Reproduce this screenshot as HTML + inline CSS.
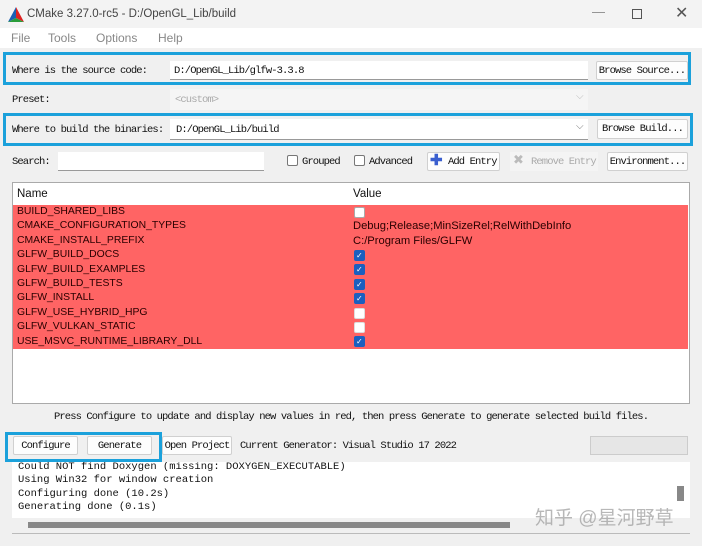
<!DOCTYPE html>
<html><head><meta charset="utf-8"><style>
*{box-sizing:border-box;margin:0;padding:0}
body{width:702px;height:546px;background:#f0f0f0;position:relative;overflow:hidden;font-family:"Liberation Sans",sans-serif}
.a{position:absolute}
.mono{font-family:"Liberation Mono","DejaVu Sans Mono",monospace;font-size:10.5px;color:#111;white-space:nowrap;letter-spacing:-0.9px}
.inp{background:#fff;border-bottom:1px solid #999}
.btn{background:#fdfdfd;border:1px solid #d0d0d0;border-radius:2px;text-align:center;line-height:18px}
.blue{border:3px solid #1ba1db}
.row{position:absolute;left:17px;font-size:10.4px;color:#2a0000;white-space:nowrap;line-height:14.4px}
.val{font-size:11.2px}
.cb{position:absolute;left:354px;width:11px;height:11px;border-radius:2px}
.on{background:#1b5fbf}
.off{background:#fff;border:1px solid #aaa}
.on:after{content:"✓";color:#fff;font-size:8px;position:absolute;left:2px;top:0;line-height:11px}
</style></head><body>
<div class="a" style="left:0;top:0;width:702px;height:28px;background:#f3f3f3"></div>
<svg class="a" style="left:8px;top:7px" width="16" height="15" viewBox="0 0 16 15"><polygon points="8,0 0,15 8,11" fill="#1a5fb4"/><polygon points="8,0 16,15 8,11" fill="#d22"/><polygon points="0,15 16,15 8,11" fill="#2a9d3a"/></svg>
<div class="a" style="left:27px;top:8px;font-size:11.5px;color:#444">CMake 3.27.0-rc5 - D:/OpenGL_Lib/build</div>
<div class="a" style="left:592px;top:4px;font-size:13px;color:#888">—</div>
<div class="a" style="left:632px;top:9px;width:10px;height:10px;border:1px solid #555"></div>
<div class="a" style="left:675px;top:3px;font-size:16px;color:#555">✕</div>
<div class="a" style="left:0;top:28px;width:702px;height:20px;background:#fff"></div>
<div class="a" style="left:11px;top:31px;font-size:12px;color:#888">File</div>
<div class="a" style="left:48px;top:31px;font-size:12px;color:#888">Tools</div>
<div class="a" style="left:96px;top:31px;font-size:12px;color:#888">Options</div>
<div class="a" style="left:158px;top:31px;font-size:12px;color:#888">Help</div>

<div class="a blue" style="left:3px;top:52px;width:688px;height:33px"></div>
<div class="a mono" style="left:12px;top:65px">Where is the source code:</div>
<div class="a inp" style="left:170px;top:61px;width:418px;height:19px"></div>
<div class="a mono" style="left:174px;top:65px">D:/OpenGL_Lib/glfw-3.3.8</div>
<div class="a btn mono" style="left:596px;top:61px;width:92px;height:19px">Browse Source...</div>

<div class="a mono" style="left:12px;top:94px">Preset:</div>
<div class="a" style="left:170px;top:89px;width:418px;height:21px;background:#f5f5f5"></div>
<div class="a mono" style="left:175px;top:94px;color:#aaa">&lt;custom&gt;</div>
<div class="a" style="left:576px;top:91px;font-size:10px;color:#bbb">⌵</div>

<div class="a blue" style="left:3px;top:113px;width:690px;height:33px"></div>
<div class="a mono" style="left:12px;top:124px">Where to build the binaries:</div>
<div class="a inp" style="left:170px;top:119px;width:418px;height:21px"></div>
<div class="a mono" style="left:176px;top:124px">D:/OpenGL_Lib/build</div>
<div class="a" style="left:576px;top:121px;font-size:10px;color:#777">⌵</div>
<div class="a btn mono" style="left:597px;top:119px;width:91px;height:20px">Browse Build...</div>

<div class="a mono" style="left:12px;top:156px">Search:</div>
<div class="a inp" style="left:58px;top:152px;width:206px;height:19px"></div>
<div class="a" style="left:287px;top:155px;width:11px;height:11px;border:1px solid #777;background:#fff;border-radius:2px"></div>
<div class="a mono" style="left:302px;top:156px">Grouped</div>
<div class="a" style="left:354px;top:155px;width:11px;height:11px;border:1px solid #777;background:#fff;border-radius:2px"></div>
<div class="a mono" style="left:369px;top:156px">Advanced</div>
<div class="a btn" style="left:427px;top:152px;width:73px;height:19px"></div>
<div class="a" style="left:430px;top:151px;font-size:15px;color:#3a5fcf;font-weight:bold">✚</div>
<div class="a mono" style="left:448px;top:156px">Add Entry</div>
<div class="a" style="left:510px;top:152px;width:88px;height:19px;background:#f4f4f4"></div>
<div class="a" style="left:513px;top:152px;font-size:13px;color:#bbb">✖</div>
<div class="a mono" style="left:531px;top:156px;color:#aaa">Remove Entry</div>
<div class="a btn mono" style="left:607px;top:152px;width:81px;height:19px">Environment...</div>

<div class="a" style="left:12px;top:182px;width:678px;height:222px;background:#fff;border:1px solid #aaa"></div>
<div class="a" style="left:17px;top:188px;font-size:11.5px;color:#111">Name</div>
<div class="a" style="left:353px;top:188px;font-size:11.5px;color:#111">Value</div>
<div class="a" style="left:13px;top:205px;width:675px;height:144px;background:#ff6464"></div>
<div class="row" style="top:205px">BUILD_SHARED_LIBS</div>
<div class="row" style="top:219.4px">CMAKE_CONFIGURATION_TYPES</div>
<div class="row" style="top:233.8px">CMAKE_INSTALL_PREFIX</div>
<div class="row" style="top:248.2px">GLFW_BUILD_DOCS</div>
<div class="row" style="top:262.6px">GLFW_BUILD_EXAMPLES</div>
<div class="row" style="top:277px">GLFW_BUILD_TESTS</div>
<div class="row" style="top:291.4px">GLFW_INSTALL</div>
<div class="row" style="top:305.8px">GLFW_USE_HYBRID_HPG</div>
<div class="row" style="top:320.2px">GLFW_VULKAN_STATIC</div>
<div class="row" style="top:334.6px">USE_MSVC_RUNTIME_LIBRARY_DLL</div>
<div class="cb off" style="top:207px"></div>
<div class="row val" style="top:219.4px;left:353px">Debug;Release;MinSizeRel;RelWithDebInfo</div>
<div class="row val" style="top:233.8px;left:353px">C:/Program Files/GLFW</div>
<div class="cb on" style="top:250px"></div>
<div class="cb on" style="top:264px"></div>
<div class="cb on" style="top:279px"></div>
<div class="cb on" style="top:293px"></div>
<div class="cb off" style="top:308px;border-color:#ddd"></div>
<div class="cb off" style="top:322px;border-color:#ddd"></div>
<div class="cb on" style="top:336px"></div>

<div class="a mono" style="left:54px;top:411px">Press Configure to update and display new values in red, then press Generate to generate selected build files.</div>

<div class="a blue" style="left:5px;top:432px;width:157px;height:30px"></div>
<div class="a btn mono" style="left:13px;top:436px;width:65px;height:19px">Configure</div>
<div class="a btn mono" style="left:87px;top:436px;width:65px;height:19px">Generate</div>
<div class="a btn mono" style="left:162px;top:436px;width:70px;height:19px">Open Project</div>
<div class="a mono" style="left:240px;top:440px">Current Generator: Visual Studio 17 2022</div>
<div class="a" style="left:590px;top:436px;width:98px;height:19px;background:#e6e6e6;border:1px solid #ccc"></div>

<div class="a" style="left:12px;top:462px;width:678px;height:56px;background:#fff;overflow:hidden">
<div class="a mono" style="left:6px;top:-1px;line-height:13.3px;letter-spacing:0">Could NOT find Doxygen (missing: DOXYGEN_EXECUTABLE)<br>Using Win32 for window creation<br>Configuring done (10.2s)<br>Generating done (0.1s)</div>
</div>
<div class="a" style="left:677px;top:486px;width:7px;height:15px;background:#888"></div>
<div class="a" style="left:12px;top:518px;width:678px;height:12px;background:#f0f0f0"></div>
<div class="a" style="left:28px;top:522px;width:482px;height:6px;background:#888"></div>
<div class="a" style="left:12px;top:533px;width:678px;height:1px;background:#bbb"></div>
<div class="a" style="left:535px;top:503px;font-size:19px;color:rgba(160,160,160,0.75);font-family:'Liberation Sans','Noto Sans CJK SC',sans-serif;white-space:nowrap">知乎 @星河野草</div>
</body></html>
